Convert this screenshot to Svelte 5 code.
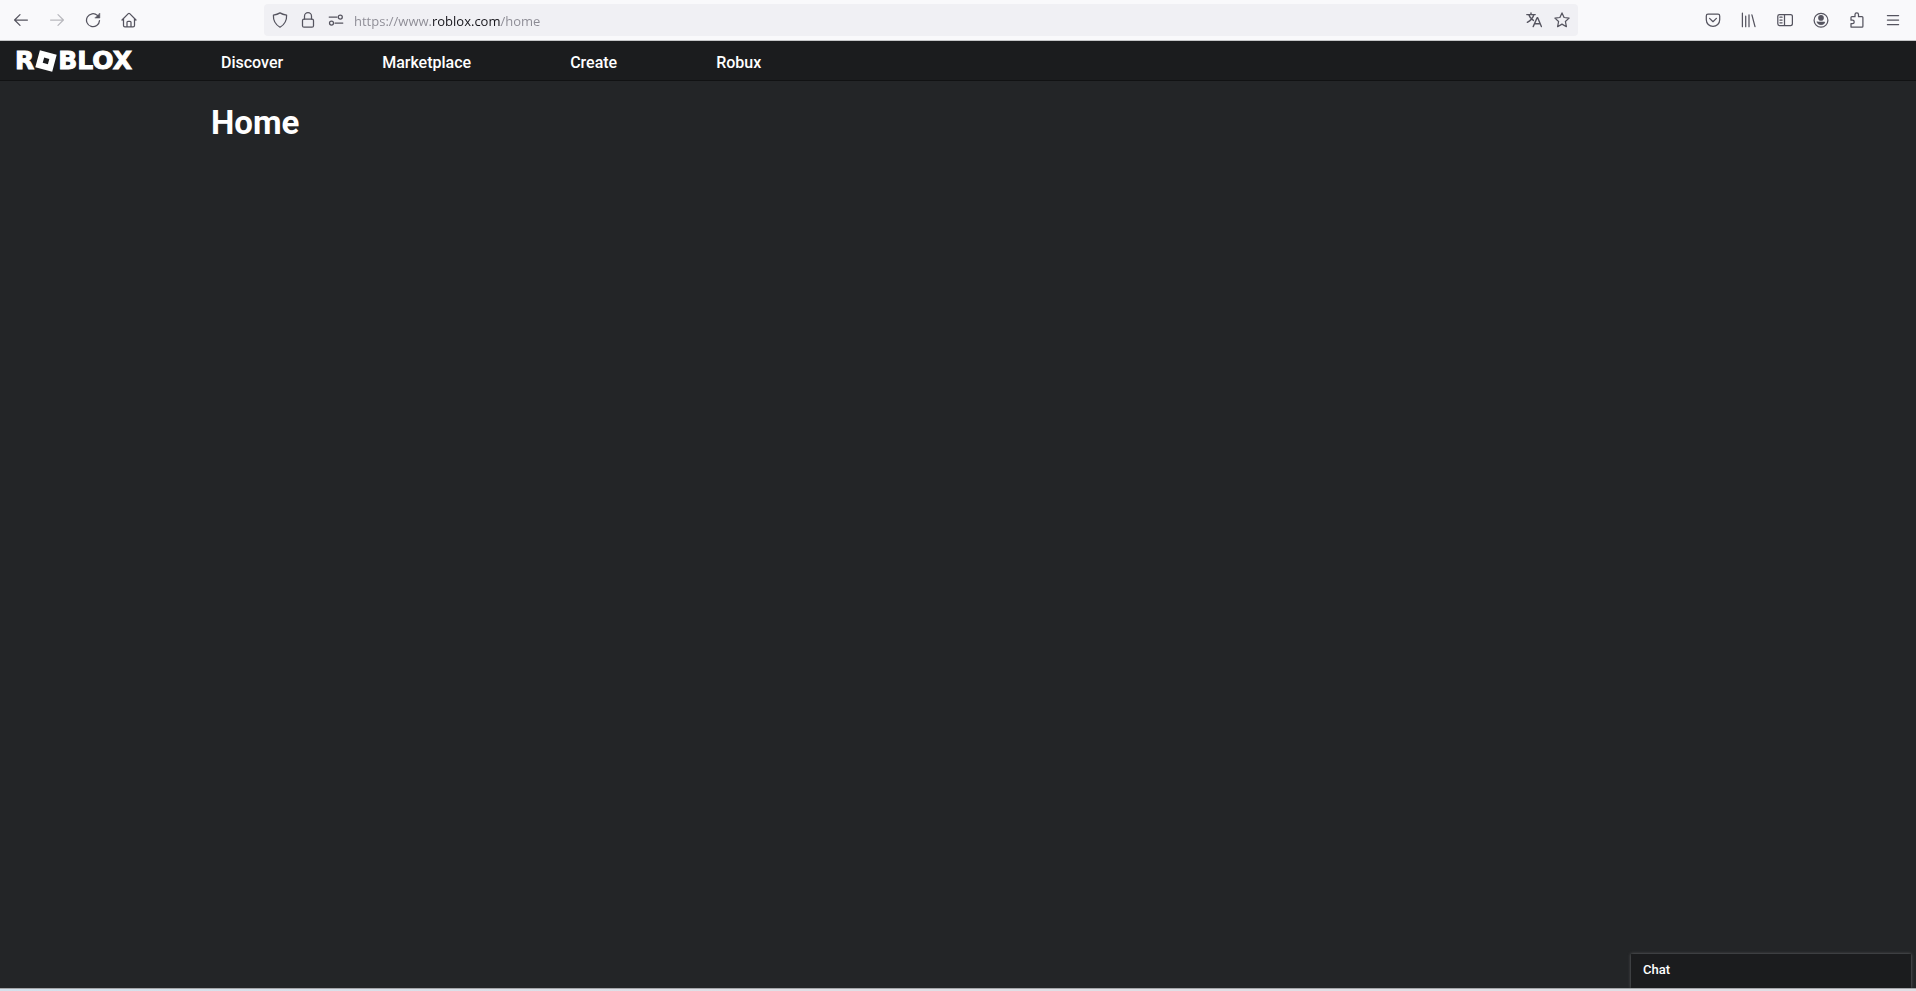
<script>
  let url = $state('https://www.roblox.com/home');
  const links = ['Discover', 'Marketplace', 'Create', 'Robux'];
</script>

{#snippet icon(name)}
  <svg viewBox="0 0 16 16" width="16" height="16" fill="none" stroke="currentColor" stroke-width="1.25" stroke-linecap="round" stroke-linejoin="round" aria-hidden="true">
    {#if name === 'back'}
      <path d="M14.4 8H1.8M7 2.6L1.6 8L7 13.4" />
    {:else if name === 'forward'}
      <path d="M1.6 8H14.2M9 2.6L14.4 8L9 13.4" />
    {:else if name === 'reload'}
      <path d="M12.4 3.4A6.5 6.5 0 1 0 14.5 8.6" />
      <path d="M14.8 1.4V6H10.2Z" fill="currentColor" stroke-width="0.6" />
    {:else if name === 'home'}
      <path d="M1 8L7.3 1.6Q8 1 8.7 1.6L15 8M2.5 6.8V13.5Q2.5 14.9 3.9 14.9H12.1Q13.5 14.9 13.5 13.5V6.8M6 14.7V10.3Q6 9.3 7 9.3H9Q10 9.3 10 10.3V14.7" />
    {:else if name === 'shield'}
      <path d="M8 .9Q10.6 2.5 14.6 3.1Q15 11.2 8 15.2Q1 11.2 1.4 3.1Q5.4 2.5 8 .9Z" />
    {:else if name === 'lock'}
      <rect x="2.5" y="7" width="11" height="8.2" rx="1.5" />
      <path d="M4.5 7V4.2A3.5 3.5 0 0 1 11.5 4.2V7" />
    {:else if name === 'permissions'}
      <path d="M1.2 5H9M7 11H14.8" />
      <circle cx="12.3" cy="5" r="2" />
      <circle cx="3.5" cy="11" r="2" />
    {:else if name === 'translate'}
      <path d="M.8 2.6H9.2M5 .9V2.6M7.8 2.8Q6.5 7.7 1.3 10.3M2.8 2.8Q3.7 6 7.4 8.4M7.2 14.6L11.1 5.8H11.7L15.4 14.6M8.6 11.8H14.1" stroke-width="1.4" />
    {:else if name === 'star'}
      <path d="M8 .9L10.1 5.5L15.1 6.1L11.4 9.5L12.4 14.7L8 12.1L3.6 14.7L4.6 9.5L.9 6.1L5.9 5.5Z" />
    {:else if name === 'pocket'}
      <path d="M3 2.2H13Q14.7 2.2 14.7 3.9V7.7A6.7 6.7 0 0 1 1.3 7.7V3.9Q1.3 2.2 3 2.2Z" />
      <path d="M4.6 6.4L8 9.7L11.4 6.4" />
    {:else if name === 'library'}
      <path d="M1.4 1.2V14.7M4.7 4.2V14.7M8 2.8V14.7M10.9 2.8L14 14.7" />
    {:else if name === 'sidebar'}
      <rect x=".8" y="2.5" width="14.6" height="11" rx="1.7" />
      <path d="M7.5 2.7V13.3M2.9 5.2H5.1M2.9 8H5.1M2.9 10.8H5.1" />
    {:else if name === 'account'}
      <circle cx="8" cy="8.2" r="6.9" />
      <circle cx="8" cy="5.9" r="2.2" fill="currentColor" />
      <path d="M4.2 10.1H11.8Q11.3 12.7 8 12.7Q4.7 12.7 4.2 10.1Z" fill="currentColor" stroke-width=".7" />
    {:else if name === 'extensions'}
      <path d="M2 15.1V11.6H3.5A1.7 1.7 0 0 0 3.5 8.2H2V5.6Q2 4.7 2.9 4.7H6V2.5A1.75 1.75 0 0 1 9.5 2.5V4.7H13Q13.9 4.7 13.9 5.6V14.2Q13.9 15.1 13 15.1Z" />
    {:else if name === 'menu'}
      <path d="M2.4 3.5H13.6M2.4 8H13.6M2.4 12.5H13.6" />
    {/if}
  </svg>
{/snippet}

<div class="page">
  <div class="toolbar">
    <div class="group">
      <button aria-label="Back">{@render icon('back')}</button>
      <button aria-label="Forward" disabled>{@render icon('forward')}</button>
      <button aria-label="Reload">{@render icon('reload')}</button>
      <button aria-label="Home page">{@render icon('home')}</button>
    </div>
    <div class="address">
      <button aria-label="Protection">{@render icon('shield')}</button>
      <button aria-label="Connection">{@render icon('lock')}</button>
      <button aria-label="Permissions">{@render icon('permissions')}</button>
      <input aria-label="Address" type="text" spellcheck="false" bind:value={url} />
      <button aria-label="Translate">{@render icon('translate')}</button>
      <button aria-label="Bookmark">{@render icon('star')}</button>
    </div>
    <div class="group">
      <button aria-label="Save">{@render icon('pocket')}</button>
      <button aria-label="Library">{@render icon('library')}</button>
      <button aria-label="Sidebar">{@render icon('sidebar')}</button>
      <button aria-label="Account">{@render icon('account')}</button>
      <button aria-label="Extensions">{@render icon('extensions')}</button>
      <button aria-label="Menu">{@render icon('menu')}</button>
    </div>
  </div>

  <header>
    <a class="logo" href="#home">
      <span>R</span>
      <svg viewBox="0 0 22 22" width="22" height="22" aria-hidden="true">
        <path fill="currentColor" fill-rule="evenodd" d="M4.9 .2L21.7 4.7L17.2 21.7L.3 17.2ZM9.2 7.6L7.7 12.8L12.9 14.2L14.3 9Z" />
      </svg>
      <span>BLOX</span>
    </a>
    <nav>
      {#each links as link}
        <a href="#{link.toLowerCase()}">{link}</a>
      {/each}
    </nav>
  </header>

  <main>
    <h1>Home</h1>
    <button class="chat">Chat</button>
  </main>
  <div class="edge"></div>
</div>

<style>
  :global(body) {
    margin: 0;
  }
  .page {
    display: flex;
    flex-direction: column;
    min-height: 100vh;
    background: #232527;
    color: #fff;
    font-family: Roboto, sans-serif;
  }
  .toolbar {
    display: flex;
    align-items: center;
    gap: 119px;
    height: 40px;
    padding: 0 7px 0 5px;
    background: #f9f9fb;
    border-bottom: 1px solid #c4c5c7;
  }
  .group {
    display: flex;
    gap: 4px;
  }
  button {
    border: 0;
    background: none;
    font: inherit;
  }
  .toolbar button {
    display: grid;
    place-items: center;
    width: 32px;
    height: 32px;
    padding: 0;
    color: #55545f;
  }
  .toolbar button:disabled {
    color: #b9b9be;
  }
  .address {
    display: flex;
    flex: 1;
    min-width: 0;
    padding: 0 2px;
    border-radius: 4px;
    background: #f0f0f4;
  }
  .toolbar .address button {
    width: 28px;
  }
  input {
    flex: 1;
    min-width: 0;
    height: 32px;
    padding: 2px 4px 0;
    box-sizing: border-box;
    border: 0;
    outline: 0;
    background: linear-gradient(90deg, #8b8a93 82px, #15141a 82px 151px, #8b8a93 151px);
    background-clip: text;
    color: transparent;
    caret-color: #15141a;
    font: 13px 'Open Sans', sans-serif;
  }
  header {
    display: flex;
    align-items: center;
    height: 39px;
    background: #1b1c1e;
    border-bottom: 1px solid #111213;
  }
  a {
    color: inherit;
    text-decoration: none;
  }
  .logo {
    display: flex;
    align-items: center;
    gap: 1px;
    width: 206px;
    padding-left: 15px;
    font: 700 25px/32px 'DejaVu Sans', sans-serif;
    -webkit-text-stroke: 1px currentColor;
  }
  nav {
    display: flex;
    gap: 99px;
    padding-top: 4px;
    font-size: 16px;
    font-weight: 500;
    line-height: 20px;
  }
  main {
    display: flex;
    flex: 1;
    flex-direction: column;
    padding: 20px 5px 0 211px;
  }
  h1 {
    margin: 0;
    font-size: 33px;
    font-weight: 700;
    line-height: 44px;
  }
  .chat {
    align-self: flex-end;
    width: 280px;
    height: 34px;
    margin-top: auto;
    padding: 0 12px 4px;
    background: #1b1c1e;
    box-shadow: 0 0 3px #6b6c6e;
    color: #fff;
    font-size: 13px;
    font-weight: 500;
    text-align: left;
  }
  .edge {
    position: relative;
    height: 2px;
    border-top: 1px solid #a3a5a8;
    background: linear-gradient(90deg, #d3e1ec, #dfdfe5 40%);
  }
</style>
